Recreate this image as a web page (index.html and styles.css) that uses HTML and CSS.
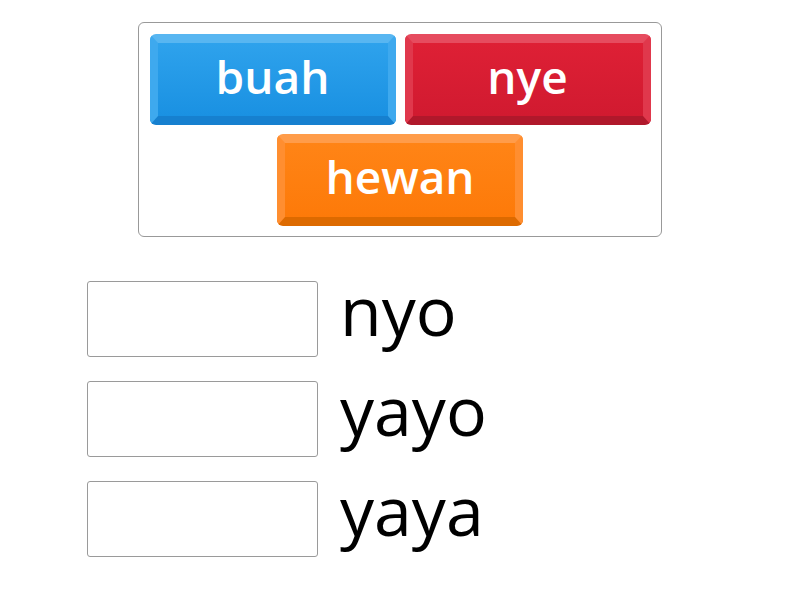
FILE: index.html
```html
<!DOCTYPE html>
<html>
<head>
<meta charset="utf-8">
<link rel="stylesheet" href="styles.css">
</head>
<body>
<div class="page">
  <div class="bank">
    <div class="tile tile-blue">buah</div>
    <div class="tile tile-red">nye</div>
    <div class="tile tile-orange">hewan</div>
  </div>
  <div class="rows">
    <div class="row"><div class="slot"></div><div class="word">nyo</div></div>
    <div class="row"><div class="slot"></div><div class="word">yayo</div></div>
    <div class="row"><div class="slot"></div><div class="word">yaya</div></div>
  </div>
</div>
</body>
</html>
```

FILE: styles.css
```css
html, body {
  margin: 0;
  padding: 0;
  background: #ffffff;
  font-family: "Open Sans", "Noto Sans", sans-serif;
}
.page {
  width: 800px;
  height: 600px;
  padding-top: 22px;
  box-sizing: border-box;
}
.bank {
  margin-left: 138px;
  width: 524px;
  box-sizing: border-box;
  border: 1px solid #999999;
  border-radius: 6px;
  padding: 11px 10px 10px 10px;
  display: flex;
  flex-wrap: wrap;
  justify-content: center;
  gap: 9px;
}
.tile {
  width: 246px;
  height: 91px;
  box-sizing: border-box;
  border-style: solid;
  border-width: 9px 8px 9px 8px;
  border-radius: 6px;
  color: #ffffff;
  font-weight: 600;
  font-size: 46px;
  display: flex;
  align-items: center;
  justify-content: center;
  line-height: 1;
  padding-bottom: 8px;
}
.tile-blue {
  background: linear-gradient(#2ea2ec, #1a91e2);
  border-color: #58b6f1 #3ea9ee #1680cf #3ea9ee;
}
.tile-red {
  background: linear-gradient(#de2035, #d11a30);
  border-color: #e64c5f #e0384c #b0182b #e0384c;
}
.tile-orange {
  height: 92px;
  background: linear-gradient(#ff8416, #fd7a09);
  border-color: #ff9c4a #ff8e30 #dd6a00 #ff8e30;
}
.rows {
  margin-top: 44px;
  margin-left: 87px;
  display: flex;
  flex-direction: column;
  gap: 24px;
}
.row {
  display: flex;
  align-items: flex-start;
  gap: 22px;
}
.slot {
  width: 231px;
  height: 76px;
  box-sizing: border-box;
  border: 1px solid #9a9a9a;
  border-radius: 3px;
  background: #fff;
}
.word {
  font-size: 68px;
  line-height: 76px;
  color: #000;
  margin-top: -9px;
}
```
